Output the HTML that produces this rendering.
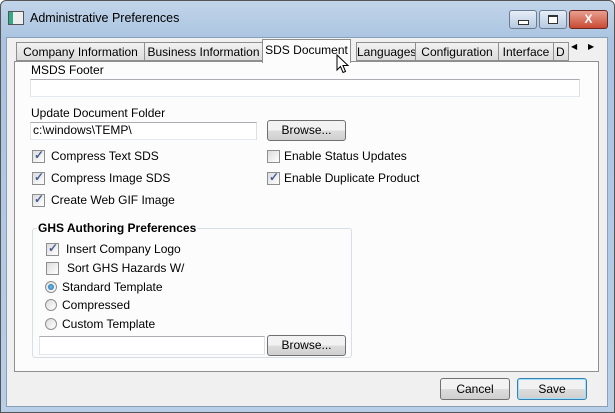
<!DOCTYPE html><html><head><style>
body{margin:0;width:615px;height:413px;overflow:hidden;font:12px "Liberation Sans",sans-serif;color:#000}
.win{position:absolute;left:0;top:0;width:613px;height:411px;border:1px solid #555;border-radius:6px 6px 0 0;background:linear-gradient(#c2d5ea,#a9c3e0 40px,#b9cfe8);}
.client{position:absolute;left:5px;top:36px;width:600px;height:368px;background:#f0f0f0;border:1px solid #8a9fb8}
.a{position:absolute;white-space:nowrap}
.tab{position:absolute;top:4px;height:19px;border:1px solid #8e8f8f;background:linear-gradient(#f2f2f2,#dcdcdc);line-height:18px;text-align:center;box-sizing:border-box}
.panel{position:absolute;left:7px;top:23px;width:583px;height:309px;border:1px solid #8e8f8f;background:#fcfcfc}
.in{position:absolute;height:18px;border:1px solid #7a7a7a;background:#fff;box-sizing:border-box;border-color:#abadb3 #dbdfe6 #e3e9ef #e2e3ea}
.btn{position:absolute;height:21px;border:1px solid #707070;border-radius:3px;background:linear-gradient(#f2f2f2 50%,#dddddd 50%,#cfcfcf);text-align:center;line-height:19px;box-sizing:border-box}
.cb{position:absolute;width:13px;height:13px;border:1px solid #8e8f8f;background:linear-gradient(135deg,#dcdcdc,#fff);box-sizing:border-box}
.cb.c::after{content:"✓";position:absolute;left:1px;top:-3px;font-size:12px;font-weight:bold;color:#4a5f97}
.rb{position:absolute;width:12px;height:12px;border:1px solid #8e8f8f;border-radius:50%;background:linear-gradient(135deg,#ddd,#fff);box-sizing:border-box}
.rb.c::after{content:"";position:absolute;left:2px;top:2px;width:6px;height:6px;border-radius:50%;background:radial-gradient(#6fc0f0,#1a64a8)}
</style></head><body>
<div class="win">
<div class="a" style="left:7px;top:10px;width:14px;height:12px;border:1px solid #555;background:linear-gradient(90deg,#3a8 30%,#eee 30%)"></div>
<div class="a" style="left:29px;top:10px;font-size:12.5px">Administrative Preferences</div>
<div class="a" style="left:508px;top:9px;width:26px;height:17px;border:1px solid #6b7c93;border-radius:3px;background:linear-gradient(#e6eef8,#b7c9e0)"><div style="position:absolute;left:8px;top:9px;width:9px;height:3px;background:#fff;border:1px solid #333"></div></div>
<div class="a" style="left:538px;top:9px;width:26px;height:17px;border:1px solid #6b7c93;border-radius:3px;background:linear-gradient(#e6eef8,#b7c9e0)"><div style="position:absolute;left:8px;top:4px;width:8px;height:6px;border:1px solid #333;border-top-width:2px;background:#fff"></div></div>
<div class="a" style="left:568px;top:9px;width:37px;height:17px;border:1px solid #6b2a20;border-radius:3px;background:linear-gradient(#e8a090,#c94a33);color:#fff;font-weight:bold;text-align:center;line-height:17px">X</div>
<div class="client">
<div class="tab" style="left:9px;width:129px">Company Information</div>
<div class="tab" style="left:137px;width:119px">Business Information</div>
<div class="tab" style="left:349px;width:60px">Languages</div>
<div class="tab" style="left:408px;width:84px">Configuration</div>
<div class="tab" style="left:491px;width:56px">Interface</div>
<div class="tab" style="left:546px;width:16px;text-align:left;padding-left:2px">D</div>
<div class="a" style="left:564px;top:4px;font-size:8px">◀</div><div class="a" style="left:581px;top:4px;font-size:8px">▶</div>
<div class="panel">
<div class="a" style="left:16px;top:1px">MSDS Footer</div>
<div class="in" style="left:15px;top:17px;width:550px"></div>
<div class="a" style="left:16px;top:44px">Update Document Folder</div>
<div class="in" style="left:15px;top:60px;width:227px;padding-left:2px;line-height:15px">c:\windows\TEMP\</div>
<div class="btn" style="left:252px;top:58px;width:79px">Browse...</div>
<div class="cb c" style="left:17px;top:88px"></div><div class="a" style="left:36px;top:87px">Compress Text SDS</div>
<div class="cb c" style="left:17px;top:110px"></div><div class="a" style="left:36px;top:109px">Compress Image SDS</div>
<div class="cb c" style="left:17px;top:132px"></div><div class="a" style="left:36px;top:131px">Create Web GIF Image</div>
<div class="cb" style="left:252px;top:88px"></div><div class="a" style="left:269px;top:87px">Enable Status Updates</div>
<div class="cb c" style="left:252px;top:110px"></div><div class="a" style="left:269px;top:109px">Enable Duplicate Product</div>
<div class="a" style="left:17px;top:166px;width:318px;height:128px;border:1px solid #d5dfe5;border-radius:3px"></div>
<div class="a" style="left:22px;top:159px;font-weight:bold;background:#fcfcfc;padding:0 1px">GHS Authoring Preferences</div>
<div class="cb c" style="left:31px;top:181px"></div><div class="a" style="left:51px;top:180px">Insert Company Logo</div>
<div class="cb" style="left:31px;top:200px"></div><div class="a" style="left:52px;top:199px">Sort GHS Hazards W/</div>
<div class="rb c" style="left:30px;top:219px"></div><div class="a" style="left:47px;top:218px">Standard Template</div>
<div class="rb" style="left:30px;top:237px"></div><div class="a" style="left:47px;top:236px">Compressed</div>
<div class="rb" style="left:30px;top:256px"></div><div class="a" style="left:47px;top:255px">Custom Template</div>
<div class="in" style="left:24px;top:274px;width:226px;height:19px"></div>
<div class="btn" style="left:252px;top:273px;width:79px">Browse...</div>
</div>
<div class="tab" style="left:255px;top:1px;width:89px;height:24px;background:#fcfcfc;border-bottom:none;line-height:20px">SDS Document</div>
<svg class="a" style="left:329px;top:16px" width="14" height="22"><path d="M1 1 L1 16 L4.5 12.5 L7 18.5 L9.5 17.5 L7 11.5 L12 11.5 Z" fill="#fff" stroke="#000"/></svg>
<div class="btn" style="left:433px;top:340px;width:70px;height:22px;line-height:20px">Cancel</div>
<div class="btn" style="left:510px;top:340px;width:70px;height:22px;line-height:20px;border-color:#3c7fb1;box-shadow:inset 0 0 0 1px #9fe0ff">Save</div>
</div>
</div>
</body></html>
